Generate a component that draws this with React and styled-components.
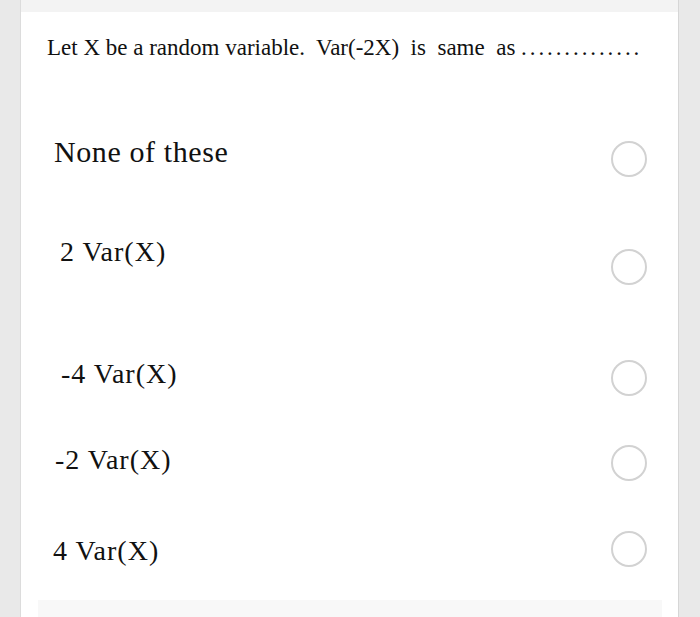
import React from "react";
import styled, { createGlobalStyle } from "styled-components";

const Global = createGlobalStyle`
  html, body { margin: 0; padding: 0; background: #e9e9e9; height: 617px; overflow: hidden; }
  #root { height: 617px; }
`;

const Page = styled.div`
  display: flex;
  justify-content: center;
  padding: 0 21px 0 20px;
  height: 617px;
`;

const Card = styled.div`
  flex: 1;
  display: flex;
  flex-direction: column;
  background: #ffffff;
  border-left: 1px solid #dcdcdc;
  border-right: 1px solid #d6d6d6;
  font-family: "Liberation Serif", "Times New Roman", serif;
  color: #111;
`;

const TopStrip = styled.div`
  height: 12px;
  background: #f3f3f3;
`;

const Question = styled.div`
  padding: 24px 0 0 26px;
  height: 93px;
  box-sizing: border-box;
  font-size: 23px;
  line-height: 24px;
  letter-spacing: 0;
  white-space: pre;
`;

const Dots = styled.span`
  letter-spacing: 2.9px;
`;

const List = styled.div`
  display: flex;
  flex-direction: column;
`;

const Row = styled.label`
  display: grid;
  grid-template-columns: 1fr 36px;
  align-items: center;
  height: ${(p) => p.$h}px;
  padding: 0 31px 0 ${(p) => p.$indent}px;
`;

const Text = styled.span`
  font-size: ${(p) => p.$size}px;
  line-height: 1;
  white-space: pre;
  letter-spacing: ${(p) => p.$ls}px;
  transform: translateY(${(p) => p.$dy}px);
`;

const Radio = styled.span`
  width: 36px;
  height: 36px;
  box-sizing: border-box;
  border: 2px solid #d2d2d2;
  border-radius: 50%;
  transform: translateY(${(p) => p.$dy}px);
`;

const BottomStrip = styled.div`
  margin: auto 16px 0 17px;
  height: 17px;
  background: #f8f8f8;
`;

const options = [
  { text: "None of these", size: 30, ls: 0.6, indent: 33, h: 108, dy: -7, rdy: 0 },
  { text: "2 Var(X)", size: 28, ls: 1, indent: 39, h: 108, dy: -15, rdy: 0 },
  { text: "-4 Var(X)", size: 28, ls: 1, indent: 40, h: 114, dy: -4, rdy: 0 },
  { text: "-2 Var(X)", size: 28, ls: 1, indent: 34, h: 56, dy: -3, rdy: 0 },
  { text: "4 Var(X)", size: 28, ls: 1, indent: 32, h: 109, dy: 5, rdy: 3 },
];

export default function App() {
  return (
    <>
      <Global />
      <Page>
        <Card>
          <TopStrip />
          <Question>
            {"Let X be a random variable.  Var(-2X)  is  same  as "}
            <Dots>..............</Dots>
          </Question>
          <List>
            {options.map((o) => (
              <Row key={o.text} $h={o.h} $indent={o.indent}>
                <Text $size={o.size} $ls={o.ls} $dy={o.dy}>{o.text}</Text>
                <Radio $dy={o.rdy} />
              </Row>
            ))}
          </List>
          <BottomStrip />
        </Card>
      </Page>
    </>
  );
}
